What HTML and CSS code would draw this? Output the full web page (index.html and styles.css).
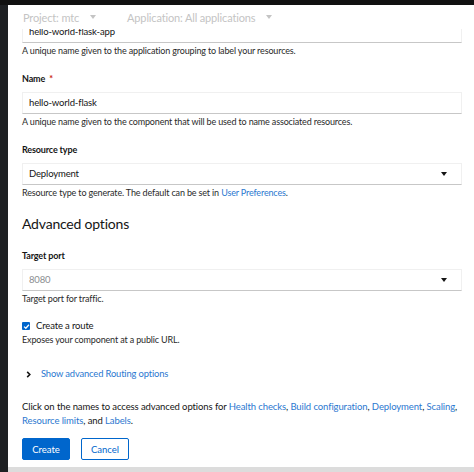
FILE: index.html
```html
<!DOCTYPE html>
<html lang="en">
<head>
  <meta charset="UTF-8" />
  <meta name="viewport" content="width=device-width, initial-scale=1" />
  <title>Import from Git</title>
  <link rel="stylesheet" href="styles.css">
</head>
<body>
  <div class="masthead"></div>
  <div class="shell">
    <div class="rail"></div>
    <div class="main">
      <div class="panel">

        <div class="context-bar">
          <span class="context">Project: mtc <span class="caret"></span></span>
          <span class="context">Application: All applications <span class="caret"></span></span>
        </div>

        <div class="scroll">
          <form class="form">

            <div class="group">
              <div class="input">hello-world-flask-app</div>
              <p class="helper">A unique name given to the application grouping to label your resources.</p>
            </div>

            <div class="group">
              <label class="label">Name <span class="req">*</span></label>
              <div class="input">hello-world-flask</div>
              <p class="helper">A unique name given to the component that will be used to name associated resources.</p>
            </div>

            <div class="group">
              <label class="label">Resource type</label>
              <div class="input select">Deployment <span class="caret dark"></span></div>
              <p class="helper">Resource type to generate. The default can be set in <a href="#">User Preferences</a>.</p>
            </div>

            <h2 class="section-title">Advanced options</h2>

            <div class="group">
              <label class="label">Target port</label>
              <div class="input select muted">8080 <span class="caret dark"></span></div>
              <p class="helper">Target port for traffic.</p>
            </div>

            <div class="group check-group">
              <label class="check"><span class="box"><svg viewBox="0 0 10 10" width="7" height="7"><path d="M1.5 5.2 L4 7.5 L8.5 2.5" fill="none" stroke="#fff" stroke-width="1.8"/></svg></span>Create a route</label>
              <p class="helper indent">Exposes your component at a public URL.</p>
            </div>

            <div class="toggle">
              <svg class="chevron" viewBox="0 0 8 8" width="7" height="7"><path d="M2.5 1 L5.5 4 L2.5 7" fill="none" stroke="#151515" stroke-width="1.8"/></svg>
              <a href="#">Show advanced Routing options</a>
            </div>

            <p class="note">Click on the names to access advanced options for <a href="#">Health checks</a>, <a href="#">Build configuration</a>, <a href="#">Deployment</a>, <a href="#">Scaling</a>, <a href="#">Resource limits</a>, and <a href="#">Labels</a>.</p>

            <div class="actions">
              <button type="button" class="btn primary">Create</button>
              <button type="button" class="btn secondary">Cancel</button>
            </div>

          </form>
        </div>

      </div>
    </div>
  </div>
</body>
</html>
```

FILE: styles.css
```css
body {
  margin: 0;
  height: 472px;
  overflow: hidden;
  background: #151515;
  font-family: Lato, sans-serif;
  color: #151515;
  display: flex;
  flex-direction: column;
}
.masthead {
  height: 5px;
  background: #111;
}
.shell {
  flex: 1;
  display: flex;
}
.rail {
  width: 8px;
  background: #1e2023;
}
.main {
  flex: 1;
  background: #dcdcdc;
}
.panel {
  height: 462px;
  background: #fff;
  display: flex;
  flex-direction: column;
  overflow: hidden;
}
.context-bar {
  height: 24px;
  display: flex;
  align-items: center;
  gap: 31px;
  padding-left: 15px;
  font-size: 11px;
  letter-spacing: -0.15px;
  color: #c4c4c4;
}
.context {
  display: flex;
  align-items: center;
  gap: 11px;
}
.caret {
  display: inline-block;
  width: 0;
  height: 0;
  border-left: 3.5px solid transparent;
  border-right: 3.5px solid transparent;
  border-top: 4px solid #c4c4c4;
}
.caret.dark {
  border-top-color: #151515;
}
.scroll {
  flex: 1;
  overflow: hidden;
}
.form {
  margin-top: -8px;
  padding: 0 12px 0 14px;
  font-size: 9px;
  letter-spacing: -0.15px;
}
.group {
  margin-bottom: 14px;
}
.label {
  display: block;
  font-weight: bold;
  line-height: 14px;
  margin-bottom: 6px;
}
.label + .input {
  margin-top: 0;
}
.req {
  color: #c9190b;
  margin-left: 2px;
}
.input {
  height: 20px;
  line-height: 20px;
  padding: 0 6px;
  border: 1px solid #f0f0f0;
  border-bottom-color: #c7c7c7;
  font-size: 9.5px;
  letter-spacing: -0.15px;
}
.select {
  display: flex;
  justify-content: space-between;
  align-items: center;
}
.select .caret {
  margin-right: 8px;
}
.muted {
  color: #8a8d90;
}
.helper {
  margin: 1px 0 0;
  line-height: 14px;
  color: #2a2a2a;
}
a {
  color: #2b78d0;
  text-decoration: none;
}
.section-title {
  margin: 0 0 15px;
  font-size: 14px;
  font-weight: normal;
  line-height: 20px;
  letter-spacing: -0.2px;
}
.check-group {
  margin-top: -1px;
  margin-bottom: 20px;
}
.check {
  display: flex;
  align-items: center;
  gap: 6px;
  line-height: 14px;
  font-size: 9.5px;
}
.box {
  width: 8px;
  height: 8px;
  border-radius: 1px;
  background: #0066cc;
  display: flex;
  align-items: center;
  justify-content: center;
}
.helper.indent {
  margin-top: 0;
}
.toggle {
  display: flex;
  align-items: center;
  gap: 9px;
  line-height: 14px;
  padding-left: 3px;
  margin-bottom: 19px;
  font-size: 9.4px;
}
.note {
  margin: 0 0 10px;
  line-height: 14px;
  font-size: 9.5px;
  letter-spacing: -0.1px;
}
.actions {
  display: flex;
  gap: 11px;
}
.btn {
  width: 48px;
  height: 22px;
  padding: 0;
  font-family: inherit;
  font-size: 9.5px;
  border-radius: 2px;
  cursor: pointer;
}
.primary {
  background: #0066cc;
  border: 1px solid #0066cc;
  color: #fff;
}
.secondary {
  background: #fff;
  border: 1px solid #0066cc;
  color: #0066cc;
}
```
